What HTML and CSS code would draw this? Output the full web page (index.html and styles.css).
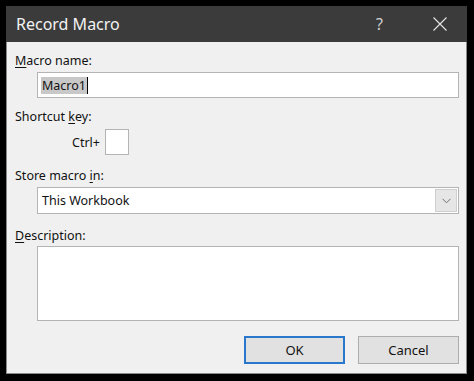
FILE: index.html
```html
<!DOCTYPE html>
<html lang="en">
<head>
  <meta charset="UTF-8">
  <title>Record Macro</title>
  <link rel="stylesheet" href="styles.css">
</head>
<body>
  <div class="dialog">
    <div class="titlebar">
      <span class="title">Record Macro</span>
      <span class="help">?</span>
      <span class="close">
        <svg width="14" height="14" viewBox="0 0 14 14"><path d="M0.5 0.5 L13.5 13.5 M13.5 0.5 L0.5 13.5" stroke="#e6e6e6" stroke-width="1.1" fill="none"/></svg>
      </span>
    </div>

    <div class="content">
      <div class="label"><u>M</u>acro name:</div>
      <div class="field name-field"><span class="selected">Macro1</span><span class="caret"></span></div>

      <div class="label label-gap">Shortcut <u>k</u>ey:</div>
      <div class="shortcut">
        <span>Ctrl+</span>
        <div class="keybox"></div>
      </div>

      <div class="label label-gap2">Store macro <u>i</u>n:</div>
      <div class="field select-field">
        <span class="select-text">This Workbook</span>
        <span class="drop">
          <svg width="9" height="6" viewBox="0 0 9 6"><path d="M0.5 0.8 L4.5 4.8 L8.5 0.8" stroke="#707070" stroke-width="1" fill="none"/></svg>
        </span>
      </div>

      <div class="label label-gap3"><u>D</u>escription:</div>
      <div class="field desc-field"></div>

      <div class="buttons">
        <button class="btn btn-ok">OK</button>
        <button class="btn">Cancel</button>
      </div>
    </div>
  </div>
</body>
</html>
```

FILE: styles.css
```css
* {
  box-sizing: border-box;
  margin: 0;
  padding: 0;
}

body {
  background: #000;
  font-family: 'Noto Sans', 'Open Sans', sans-serif;
  font-size: 12.5px;
  color: #111;
}

.dialog {
  margin: 6px 0 0 6px;
  width: 461px;
  height: 368px;
  display: flex;
  flex-direction: column;
}

.titlebar {
  height: 36px;
  background: #3b3b3b;
  color: #f2f2f2;
  display: flex;
  align-items: center;
  padding-left: 10px;
}

.title {
  font-size: 16px;
  flex: 1;
}

.help {
  font-size: 16px;
  color: #d0d0d0;
  width: 12px;
  margin-right: 45px;
}

.close {
  display: flex;
  margin-right: 20px;
}

.content {
  flex: 1;
  background: #f0f0f0;
  border: 1px solid #8a8a8a;
  border-top: none;
  padding: 10px 7px 0 8px;
  display: flex;
  flex-direction: column;
}

.label {
  line-height: 18px;
  height: 18px;
}

.label u {
  text-decoration-thickness: 1px;
  text-underline-offset: 2px;
}

.label-gap { margin-top: 10px; }
.label-gap2 { margin-top: 12px; }
.label-gap3 { margin-top: 13px; }

.field {
  margin-left: 22px;
  background: #fff;
  border: 1px solid #b4b4b4;
}

.name-field {
  margin-top: 2px;
  height: 26px;
  display: flex;
  align-items: center;
  padding-left: 3px;
}

.selected {
  background: #c8c8c8;
  padding: 0 1px;
  line-height: 17px;
}

.caret {
  width: 1px;
  height: 17px;
  background: #000;
}

.shortcut {
  margin-top: 3px;
  margin-left: 57px;
  display: flex;
  align-items: center;
  gap: 5px;
}

.keybox {
  width: 24px;
  height: 26px;
  background: #fff;
  border: 1px solid #b4b4b4;
}

.select-field {
  margin-top: 2px;
  height: 27px;
  display: flex;
  align-items: center;
  padding: 0 1px 0 4px;
}

.select-text {
  flex: 1;
}

.drop {
  width: 22px;
  height: 23px;
  background: #e6e6e6;
  border: 1px solid #cfcfcf;
  display: flex;
  align-items: center;
  justify-content: center;
}

.desc-field {
  margin-top: 1px;
  height: 75px;
}

.buttons {
  margin-top: 15px;
  display: flex;
  justify-content: flex-end;
  gap: 13px;
}

.btn {
  width: 101px;
  height: 28px;
  background: #e1e1e1;
  border: 1px solid #adadad;
  font-family: inherit;
  font-size: 13px;
  color: #111;
}

.btn-ok {
  border: 2px solid #2a78cc;
}
```
